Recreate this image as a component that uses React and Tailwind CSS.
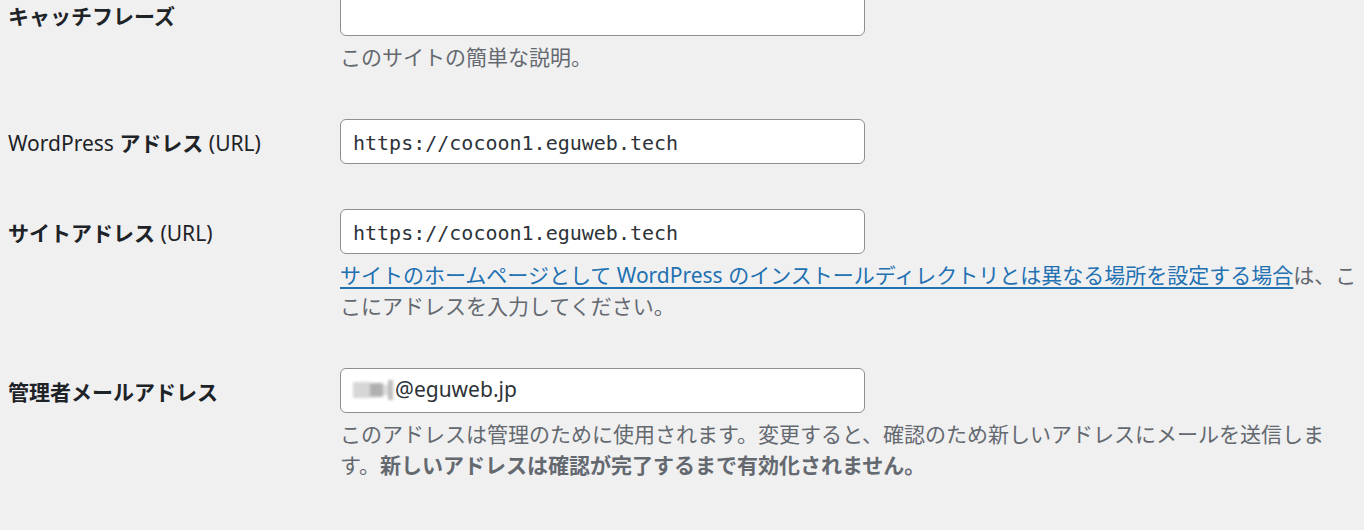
export default function App() {
  const sans = { fontFamily: '"Noto Sans", "Noto Sans CJK JP", sans-serif' };
  const Input = ({ value, mono = true, children }) => (
    <div className="w-[525px] h-[45px] bg-white border-[1.5px] border-[#8c8f94] rounded-[6px] flex items-center px-[12px] text-[#2c3338]">
      {children ? children : (
        <span className={mono ? "text-[20px] pt-[3px]" : "text-[21px]"} style={mono ? { fontFamily: '"DejaVu Sans Mono", "Liberation Mono", monospace' } : sans}>{value}</span>
      )}
    </div>
  );
  const Row = ({ label, children }) => (
    <div className="flex">
      <div className="w-[332px] shrink-0 pt-[34px] pb-[26px] text-[21px] leading-[27px] text-[#1d2327]">{label}</div>
      <div className="flex-1 pt-[22.5px] pb-[22.5px]">{children}</div>
    </div>
  );
  const Desc = ({ children }) => (
    <p className="mt-[6px] text-[21px] leading-[31.5px] text-[#646970] whitespace-nowrap">{children}</p>
  );
  return (
    <div className="w-[1364px] h-[530px] overflow-hidden bg-[#f0f0f1]" style={sans}>
      <div className="mt-[-31.5px] pl-[8px]">
        <Row label={<span className="font-bold">キャッチフレーズ</span>}>
          <Input value="" />
          <Desc>このサイトの簡単な説明。</Desc>
        </Row>
        <Row label={<><span className="font-normal">WordPress </span><span className="font-bold">アドレス</span><span className="font-normal"> (URL)</span></>}>
          <Input value="https://cocoon1.eguweb.tech" />
        </Row>
        <Row label={<><span className="font-bold">サイトアドレス</span><span className="font-normal"> (URL)</span></>}>
          <Input value="https://cocoon1.eguweb.tech" />
          <Desc>
            <a href="#" className="text-[#2271b1] underline underline-offset-[4px] decoration-[2px]">サイトのホームページとして WordPress のインストールディレクトリとは異なる場所を設定する場合</a>は、こ
            <br />
            こにアドレスを入力してください。
          </Desc>
        </Row>
        <Row label={<span className="font-bold">管理者メールアドレス</span>}>
          <Input>
            <div className="flex items-center h-[22px] blur-[1.5px]">
              <div className="w-[17px] h-[16px] bg-[#d6d6d6]" />
              <div className="w-[13px] h-[14px] bg-[#b0b0b0]" />
              <div className="w-[5px] h-[10px] bg-[#dcdcdc]" />
              <div className="w-[5px] h-[20px] bg-[#bdbdbd]" />
            </div>
            <span className="text-[21px] text-[#2c3338] ml-[2px]" style={sans}>@eguweb.jp</span>
          </Input>
          <Desc>
            このアドレスは管理のために使用されます。変更すると、確認のため新しいアドレスにメールを送信しま
            <br />
            す。<strong className="font-bold">新しいアドレスは確認が完了するまで有効化されません。</strong>
          </Desc>
        </Row>
      </div>
    </div>
  );
}
